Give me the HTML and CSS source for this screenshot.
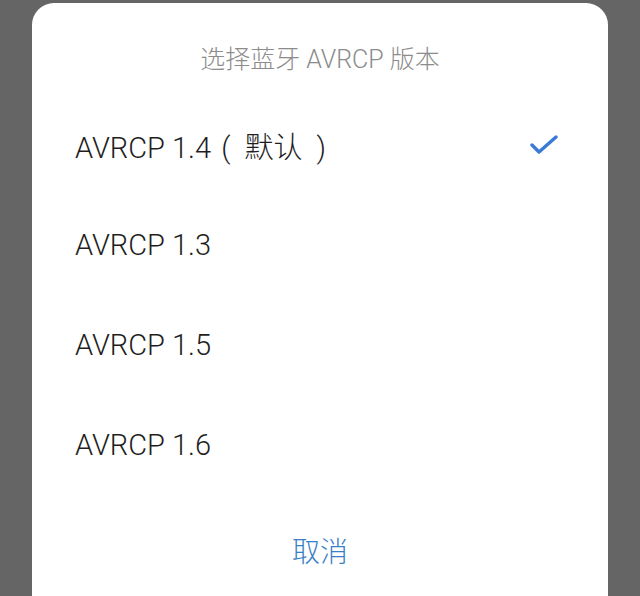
FILE: index.html
```html
<!DOCTYPE html>
<html lang="zh-CN">
<head>
    <meta charset="UTF-8">
    <meta name="viewport" content="width=device-width, initial-scale=1.0">
    <title>选择蓝牙 AVRCP 版本</title>
    <link rel="stylesheet" href="styles.css">
</head>
<body>
    <div class="dialog">
        <div class="dialog-title">选择蓝牙 AVRCP 版本</div>
        <div class="options">
            <div class="option selected">
                <span class="label">AVRCP 1.4 <span class="note">( 默认 )</span></span>
                <svg class="check" width="28" height="22" viewBox="0 0 28 22">
                    <polyline points="2,11 9,18 26,3" fill="none" stroke="#3a7ad6" stroke-width="3.4" stroke-linecap="round" stroke-linejoin="round"/>
                </svg>
            </div>
            <div class="option"><span class="label">AVRCP 1.3</span></div>
            <div class="option"><span class="label">AVRCP 1.5</span></div>
            <div class="option"><span class="label">AVRCP 1.6</span></div>
        </div>
        <div class="cancel">取消</div>
    </div>
</body>
</html>
```

FILE: styles.css
```css
body {
    margin: 0;
    background-color: #656565;
    font-family: Roboto, "Noto Sans CJK SC", sans-serif;
    overflow: hidden;
}
.dialog {
    margin: 3px 32px 0;
    height: 620px;
    background-color: #ffffff;
    border-radius: 22px;
}
.dialog-title {
    padding: 41px 0 19px;
    line-height: 32px;
    font-size: 25px;
    font-weight: 300;
    color: #8c8c8c;
    text-align: center;
}
.option {
    height: 100px;
    display: flex;
    align-items: center;
    justify-content: space-between;
    padding: 0 50px 0 43px;
}
.label {
    font-size: 29px;
    font-weight: 300;
    color: #1e1e1e;
}
.note {
    margin-left: 3px;
    word-spacing: 7px;
}
.check {
    display: block;
}
.cancel {
    padding-top: 42px;
    line-height: 32px;
    font-size: 28px;
    font-weight: 300;
    color: #3b7fc6;
    text-align: center;
}
```
